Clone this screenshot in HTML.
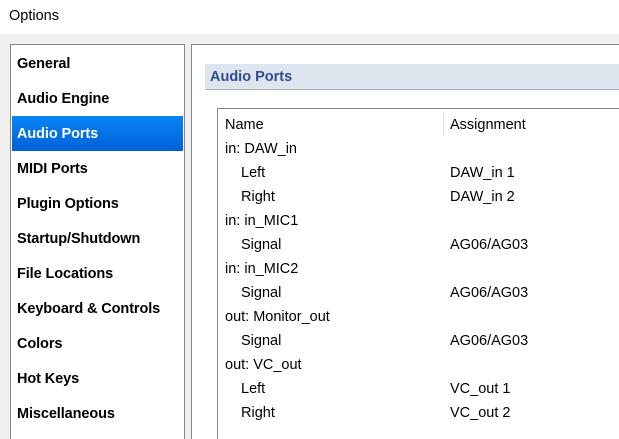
<!DOCTYPE html>
<html><head><style>
*{margin:0;padding:0;box-sizing:border-box}
html,body{width:619px;height:439px;overflow:hidden}
body{background:#f0f0f0;font-family:"Liberation Sans",sans-serif;color:#000;position:relative}
.t{position:absolute;white-space:nowrap}
#title{position:absolute;left:0;top:0;width:619px;height:34px;background:#fff}
#left{position:absolute;left:10px;top:44px;width:175px;height:395px;background:#fff;border:1px solid #828790;border-bottom:none}
#sel{position:absolute;left:12px;top:116px;width:171px;height:35px;background:linear-gradient(#0a84f4,#0060d8)}
.li{position:absolute;left:17px;font-size:14.5px;font-weight:bold;letter-spacing:-0.1px}
#right{position:absolute;left:191px;top:44px;width:428px;height:395px;background:#fff;border:1px solid #828790;border-bottom:none;border-right:none}
#hdr{position:absolute;left:205px;top:64px;width:414px;height:26px;background:#dde5ee;border-bottom:1px solid #a8b0ba}
#tbl{position:absolute;left:217px;top:108px;width:402px;height:331px;border:1px solid #828790;border-bottom:none;border-right:none;background:#fff}
#div{position:absolute;left:443px;top:112px;width:1px;height:24px;background:#e0e0e0}
.r{position:absolute;font-size:14.5px}
</style></head><body>
<div id="title"></div>
<div class="t" style="left:9px;top:8px;font-size:14.5px">Options</div>
<div id="left"></div>
<div id="sel"></div>
<div class="li t" style="top:56px">General</div>
<div class="li t" style="top:91px">Audio Engine</div>
<div class="li t" style="top:126px;color:#fff">Audio Ports</div>
<div class="li t" style="top:161px">MIDI Ports</div>
<div class="li t" style="top:196px">Plugin Options</div>
<div class="li t" style="top:231px">Startup/Shutdown</div>
<div class="li t" style="top:266px">File Locations</div>
<div class="li t" style="top:301px">Keyboard &amp; Controls</div>
<div class="li t" style="top:336px">Colors</div>
<div class="li t" style="top:371px">Hot Keys</div>
<div class="li t" style="top:406px">Miscellaneous</div>
<div id="right"></div>
<div id="hdr"></div>
<div class="t" style="left:210px;top:69px;font-size:14.5px;font-weight:bold;color:#334a8c">Audio Ports</div>
<div id="tbl"></div>
<div id="div"></div>
<div class="r t" style="left:225px;top:117px">Name</div>
<div class="r t" style="left:450px;top:117px">Assignment</div>
<div class="r t" style="left:225px;top:141px">in: DAW_in</div>
<div class="r t" style="left:241px;top:165px">Left</div><div class="r t" style="left:450px;top:165px">DAW_in 1</div>
<div class="r t" style="left:241px;top:189px">Right</div><div class="r t" style="left:450px;top:189px">DAW_in 2</div>
<div class="r t" style="left:225px;top:213px">in: in_MIC1</div>
<div class="r t" style="left:241px;top:237px">Signal</div><div class="r t" style="left:450px;top:237px">AG06/AG03</div>
<div class="r t" style="left:225px;top:261px">in: in_MIC2</div>
<div class="r t" style="left:241px;top:285px">Signal</div><div class="r t" style="left:450px;top:285px">AG06/AG03</div>
<div class="r t" style="left:225px;top:309px">out: Monitor_out</div>
<div class="r t" style="left:241px;top:333px">Signal</div><div class="r t" style="left:450px;top:333px">AG06/AG03</div>
<div class="r t" style="left:225px;top:357px">out: VC_out</div>
<div class="r t" style="left:241px;top:381px">Left</div><div class="r t" style="left:450px;top:381px">VC_out 1</div>
<div class="r t" style="left:241px;top:405px">Right</div><div class="r t" style="left:450px;top:405px">VC_out 2</div>
</body></html>
